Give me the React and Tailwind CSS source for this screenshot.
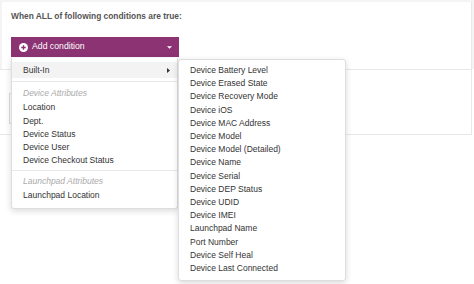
const leftItems = ["Location", "Dept.", "Device Status", "Device User", "Device Checkout Status"];

const subItems = [
  "Device Battery Level",
  "Device Erased State",
  "Device Recovery Mode",
  "Device iOS",
  "Device MAC Address",
  "Device Model",
  "Device Model (Detailed)",
  "Device Name",
  "Device Serial",
  "Device DEP Status",
  "Device UDID",
  "Device IMEI",
  "Launchpad Name",
  "Port Number",
  "Device Self Heal",
  "Device Last Connected",
];

const App = () => {
  return (
    <div className="relative h-[284px] w-[474px] overflow-hidden bg-white font-['Liberation_Sans',Arial,sans-serif] text-[8.5px] text-[#333]">
      <div className="bg-[#f4f4f4] pl-[2px] pr-[2px] pt-[2px]">
        <div className="h-[67px] border-r border-[#e8e8e8] bg-white pl-[9px] pt-[8px]">
          <p className="text-[8.4px] font-bold leading-[13px] text-[#555]">When ALL of following conditions are true:</p>

          <div className="relative mt-[14px] w-[168px]">
            <button className="flex h-[20px] w-[168px] items-center bg-[#8b3373] pl-[8px] pr-[7px] text-[8.7px] text-white">
              <svg width="9" height="9" viewBox="0 0 16 16" className="mr-[4px]">
                <circle cx="8" cy="8" r="8" fill="#fff" />
                <path d="M8 4v8M4 8h8" stroke="#8b3373" strokeWidth="2.4" />
              </svg>
              <span>Add condition</span>
              <svg width="5" height="3" viewBox="0 0 6 3" className="ml-auto">
                <path d="M0 0h6L3 3z" fill="#fff" />
              </svg>
            </button>
          </div>
        </div>
      </div>

      <div className="mr-[2px] h-[66px] border-b border-r border-t border-[#e8e8e8] pl-[9px] pt-[23px]">
        <div className="h-[31px] w-[300px] border border-[#dcdcdc]" />
      </div>

      <div className="absolute left-[11px] top-[58px] w-[167px] rounded-b-[3px] border border-t-0 border-[#dedede] bg-white pb-[6px] pt-[4px] leading-[13.3px] shadow-[0_2px_6px_rgba(0,0,0,0.15)]">
        <div className="flex h-[16px] items-center bg-[#f3f3f3] pl-[11px] pr-[7px] pt-px">
          <span>Built-In</span>
          <svg width="3" height="5" viewBox="0 0 3 5" className="ml-auto">
            <path d="M0 0l3 2.5L0 5z" fill="#333" />
          </svg>
        </div>
        <div className="mb-[5px] mt-[3px] h-px bg-[#e8e8e8]" />
        <div className="pb-px pl-[11px] italic text-[#aaa]">Device Attributes</div>
        {leftItems.map((item) => (
          <div key={item} className="pl-[11px]">
            {item}
          </div>
        ))}
        <div className="mb-[4px] mt-[2px] h-px bg-[#e8e8e8]" />
        <div className="pb-px pl-[11px] italic text-[#aaa]">Launchpad Attributes</div>
        <div className="pl-[11px]">Launchpad Location</div>
      </div>

      <div className="absolute left-[178px] top-[59px] w-[168px] rounded-[3px] border border-[#dedede] bg-white pb-[5px] pt-[4px] leading-[13.2px] shadow-[0_2px_6px_rgba(0,0,0,0.15)]">
        {subItems.map((item) => (
          <div key={item} className="pl-[11px]">
            {item}
          </div>
        ))}
      </div>
    </div>
  );
};

export default App;
